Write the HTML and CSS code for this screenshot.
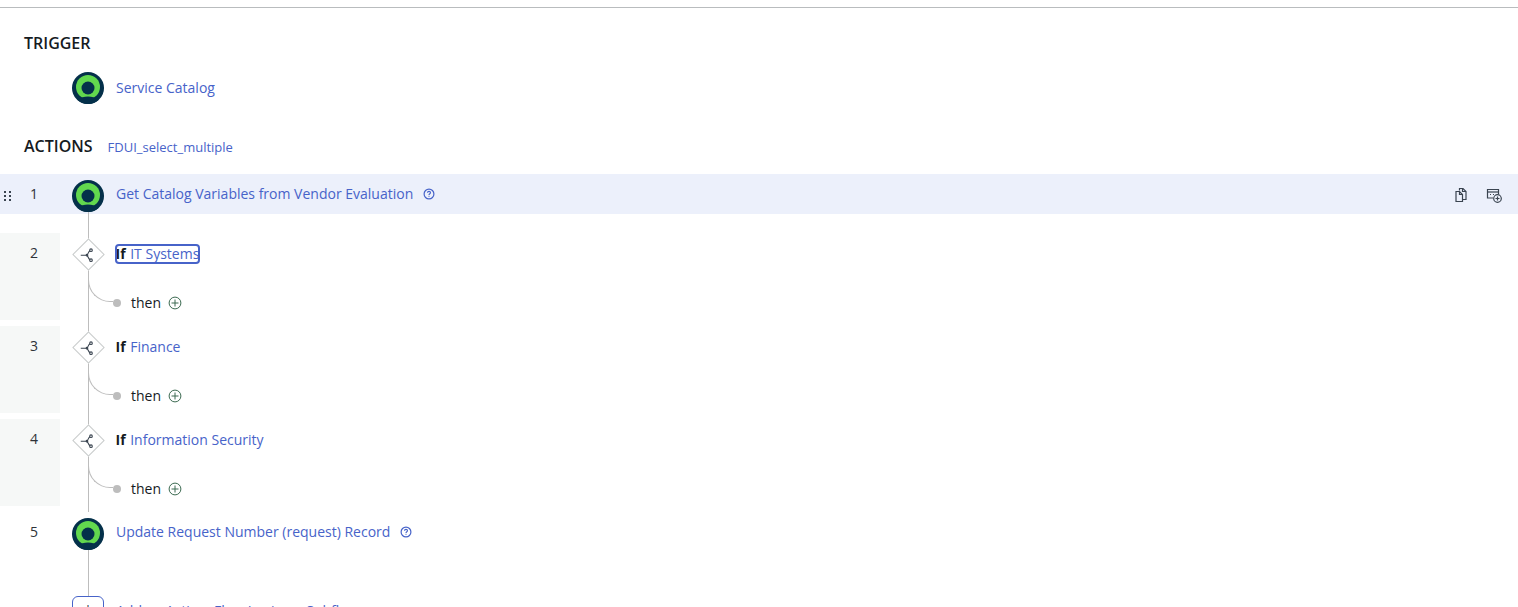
FILE: index.html
```html
<!DOCTYPE html>
<html lang="en">
<head>
    <meta charset="UTF-8">
    <title>FDUI_select_multiple</title>
    <link rel="stylesheet" href="styles.css">
</head>
<body>
    <main class="flow">
        <!-- Trigger -->
        <h2 class="heading trigger-heading">TRIGGER</h2>
        <div class="trigger-row">
            <svg class="spoke" viewBox="0 0 32 32"><use href="#spoke-icon"/></svg>
            <a class="link" href="#">Service Catalog</a>
        </div>

        <!-- Actions -->
        <div class="actions-head">
            <h2 class="heading">ACTIONS</h2>
            <a class="link small" href="#">FDUI_select_multiple</a>
        </div>

        <div class="step step-selected">
            <svg class="grip" viewBox="0 0 8 12"><g fill="#3a4450"><rect x="0" y="1" width="2" height="2"/><rect x="5" y="1" width="2" height="2"/><rect x="0" y="5" width="2" height="2"/><rect x="5" y="5" width="2" height="2"/><rect x="0" y="9" width="2" height="2"/><rect x="5" y="9" width="2" height="2"/></g></svg>
            <span class="num">1</span>
            <span class="node line-below"><svg class="spoke" viewBox="0 0 32 32"><use href="#spoke-icon"/></svg></span>
            <a class="link" href="#">Get Catalog Variables from Vendor Evaluation</a>
            <svg class="help" viewBox="0 0 12 12"><use href="#help-icon"/></svg>
            <div class="step-tools">
                <svg class="tool" viewBox="0 0 16 16" fill="none" stroke="#3a4450" stroke-width="1.2"><path d="M6.500 3.500V1.500h3.500l3 3v8h-3"/><path d="M9.500 1.500v3h3.500"/><path d="M3 4.500h3.500l3 3v7H3z"/><path d="M6.500 4.500v3h3"/></svg>
                <svg class="tool" viewBox="0 0 16 16" fill="none" stroke="#3a4450" stroke-width="1.2"><path d="M7 11H1.500V2.500h11V7"/><path d="M1.500 5h11"/><path d="M4 7.500h1M7 7.500h1"/><circle cx="11.500" cy="11.500" r="3.800"/><path d="M11.500 9.500v4M9.500 11.500h4"/></svg>
            </div>
        </div>

        <div class="step step-if line-above">
            <span class="num">2</span>
            <div class="if-main">
                <div class="if-row">
                    <span class="diamond"><svg class="branch" viewBox="0 0 16 16"><use href="#branch-icon"/></svg></span>
                    <a class="if-text focused" href="#"><b>If</b> <span class="link">IT Systems</span></a>
                </div>
                <div class="then-row">
                    <span class="then-dot"></span><span class="then">then</span>
                    <svg class="add" viewBox="0 0 14 14"><use href="#add-icon"/></svg>
                </div>
            </div>
        </div>

        <div class="step step-if">
            <span class="num">3</span>
            <div class="if-main">
                <div class="if-row">
                    <span class="diamond"><svg class="branch" viewBox="0 0 16 16"><use href="#branch-icon"/></svg></span>
                    <a class="if-text" href="#"><b>If</b> <span class="link">Finance</span></a>
                </div>
                <div class="then-row">
                    <span class="then-dot"></span><span class="then">then</span>
                    <svg class="add" viewBox="0 0 14 14"><use href="#add-icon"/></svg>
                </div>
            </div>
        </div>

        <div class="step step-if">
            <span class="num">4</span>
            <div class="if-main">
                <div class="if-row">
                    <span class="diamond"><svg class="branch" viewBox="0 0 16 16"><use href="#branch-icon"/></svg></span>
                    <a class="if-text" href="#"><b>If</b> <span class="link">Information Security</span></a>
                </div>
                <div class="then-row">
                    <span class="then-dot"></span><span class="then">then</span>
                    <svg class="add" viewBox="0 0 14 14"><use href="#add-icon"/></svg>
                </div>
            </div>
        </div>

        <div class="step step-last">
            <span class="num">5</span>
            <span class="node line-long"><svg class="spoke" viewBox="0 0 32 32"><use href="#spoke-icon"/></svg></span>
            <a class="link" href="#">Update Request Number (request) Record</a>
            <svg class="help" viewBox="0 0 12 12"><use href="#help-icon"/></svg>
        </div>

        <div class="add-row">
            <span class="add-box">+</span>
            <a class="link" href="#">Add an Action, Flow Logic, or Subflow</a>
        </div>
    </main>

    <!-- Shared icons -->
    <svg class="defs" width="0" height="0">
        <defs>
            <symbol id="spoke-icon" viewBox="0 0 32 32">
                <circle cx="16" cy="16" r="16" fill="#04304a"/>
                <circle cx="16" cy="15" r="12" fill="#62d84e"/>
                <circle cx="16" cy="16" r="6.500" fill="#04304a"/>
                <path d="M5.400 28C9 25 12 24.500 16 24.500C20 24.500 23 25 26.600 28A16 16 0 0 1 5.400 28Z" fill="#04304a"/>
            </symbol>
            <symbol id="help-icon" viewBox="0 0 12 12">
                <circle cx="6" cy="6" r="4.900" fill="none" stroke="#4763c9" stroke-width="1.200"/>
                <path d="M4.500 4.800C4.500 3.900 5.200 3.400 6 3.400S7.500 3.900 7.500 4.700C7.500 5.700 6 5.700 6 6.900" fill="none" stroke="#4763c9" stroke-width="1.100"/>
                <rect x="5.500" y="7.800" width="1" height="1" fill="#4763c9"/>
            </symbol>
            <symbol id="branch-icon" viewBox="0 0 16 16">
                <g fill="none" stroke="#3a4450" stroke-width="1.100">
                    <path d="M0 8h6"/>
                    <path d="M6 8C7.500 8 7.500 4.500 9.500 3.500"/>
                    <path d="M6 8C7.500 8 7.500 11.500 9.500 12.500"/>
                    <circle cx="6.500" cy="8" r="0.800"/>
                    <circle cx="10.500" cy="3" r="1.300"/>
                    <circle cx="10.500" cy="13" r="1.300"/>
                </g>
            </symbol>
            <symbol id="add-icon" viewBox="0 0 14 14">
                <circle cx="7" cy="7" r="5.900" fill="none" stroke="#3d6b52" stroke-width="1"/>
                <path d="M7 3.500v7M3.500 7h7" stroke="#3d6b52" stroke-width="1"/>
            </symbol>
        </defs>
    </svg>
</body>
</html>
```
FILE: styles.css
```css
html, body {
    height: 607px;
    overflow: hidden;
}
body {
    margin: 0;
    padding-top: 7px;
    background: #fff;
    color: #161b1f;
    font-family: "Open Sans", "Noto Sans", sans-serif;
    font-size: 14px;
}
a {
    text-decoration: none;
}
.flow {
    border-top: 1px solid #b9bcbe;
}
.defs {
    position: absolute;
}
.heading {
    margin: 0;
    font-size: 16px;
    font-weight: 600;
    line-height: 22px;
}
.trigger-heading {
    margin: 24px 0 0 24px;
}
.link {
    color: #4763c9;
}
.small {
    font-size: 13px;
    margin-top: 2px;
}
.trigger-row {
    display: flex;
    align-items: center;
    gap: 12px;
    height: 32px;
    margin: 18px 0 0 72px;
}
.trigger-row .link {
    margin-bottom: 2px;
}
.spoke {
    display: block;
    width: 32px;
    height: 32px;
    flex: none;
}
.actions-head {
    display: flex;
    align-items: center;
    gap: 15px;
    margin: 31px 0 0 24px;
    height: 22px;
}
.step {
    display: flex;
    position: relative;
}
.num {
    width: 60px;
    flex: none;
    padding-left: 8px;
    box-sizing: border-box;
    text-align: center;
    line-height: 20px;
    color: #2e3338;
}
.node {
    width: 56px;
    flex: none;
    padding-left: 12px;
    box-sizing: border-box;
    position: relative;
}
.step-selected {
    align-items: flex-start;
    height: 40px;
    margin-top: 17px;
    padding-top: 6px;
    box-sizing: border-box;
    background: #ecf0fb;
}
.step-selected .num,
.step-selected .link {
    margin-top: 4px;
}
.step-selected .help {
    margin-top: 8px;
}
.line-below::after {
    content: "";
    position: absolute;
    left: 28px;
    top: 32px;
    width: 1px;
    height: 27px;
    background: #bdbdbd;
}
.grip {
    position: absolute;
    left: 4px;
    top: 16px;
    width: 8px;
    height: 12px;
}
.help {
    width: 12px;
    height: 12px;
    margin-left: 10px;
    flex: none;
}
.step-tools {
    display: flex;
    gap: 17px;
    margin: 7px 16px 0 auto;
}
.tool {
    width: 16px;
    height: 16px;
}
.step-if {
    height: 87px;
    margin-top: 6px;
}
.line-above {
    margin-top: 19px;
}
.step-if .num {
    background: #f6f8f7;
    padding-top: 10px;
    height: 87px;
}
.if-main {
    position: relative;
    flex: 1;
}
.if-main::before {
    content: "";
    position: absolute;
    left: 28px;
    top: 0;
    width: 1px;
    height: 93px;
    background: #bdbdbd;
}
.if-row {
    display: flex;
    align-items: center;
    height: 43px;
    position: relative;
}
.diamond {
    width: 23px;
    height: 23px;
    margin-left: 16.500px;
    border: 1px solid #c9cccc;
    background: #fff;
    transform: rotate(45deg);
    box-sizing: border-box;
    flex: none;
    display: flex;
    align-items: center;
    justify-content: center;
}
.branch {
    width: 16px;
    height: 16px;
    transform: rotate(-45deg);
}
.if-text {
    margin: 0 0 1px 16px;
    color: #161b1f;
    line-height: 18px;
}
.if-text b {
    margin-right: 1px;
}
.focused {
    outline: 2px solid #4763c9;
    outline-offset: -1px;
    border-radius: 3px;
}
.then-row {
    display: flex;
    align-items: center;
    position: relative;
    height: 20px;
    margin-top: 17px;
}
.then-dot {
    width: 8px;
    height: 8px;
    margin-left: 53px;
    border-radius: 50%;
    background: #bdbdbd;
}
.then-dot::before {
    content: "";
    position: absolute;
    left: 28px;
    top: -22px;
    width: 25px;
    height: 31px;
    border-left: 1px solid #bdbdbd;
    border-bottom: 1px solid #bdbdbd;
    border-bottom-left-radius: 22px;
    box-sizing: border-box;
}
.then {
    margin: 0 0 2px 10px;
}
.add {
    width: 14px;
    height: 14px;
    margin-left: 7px;
}
.step-last {
    align-items: flex-start;
    height: 84px;
    margin-top: 6px;
    padding-top: 6px;
    box-sizing: border-box;
}
.step-last .num,
.step-last .link {
    margin-top: 4px;
}
.step-last .help {
    margin-top: 8px;
}
.line-long::after {
    content: "";
    position: absolute;
    left: 28px;
    top: 32px;
    width: 1px;
    height: 46px;
    background: #bdbdbd;
}
.add-row {
    display: flex;
    gap: 12px;
    margin-left: 72px;
}
.add-box {
    width: 32px;
    height: 32px;
    box-sizing: border-box;
    border: 1px solid #4763c9;
    border-radius: 6px;
    text-align: center;
    line-height: 24px;
    color: #2e3338;
}
.add-row .link {
    line-height: 30px;
}
```
